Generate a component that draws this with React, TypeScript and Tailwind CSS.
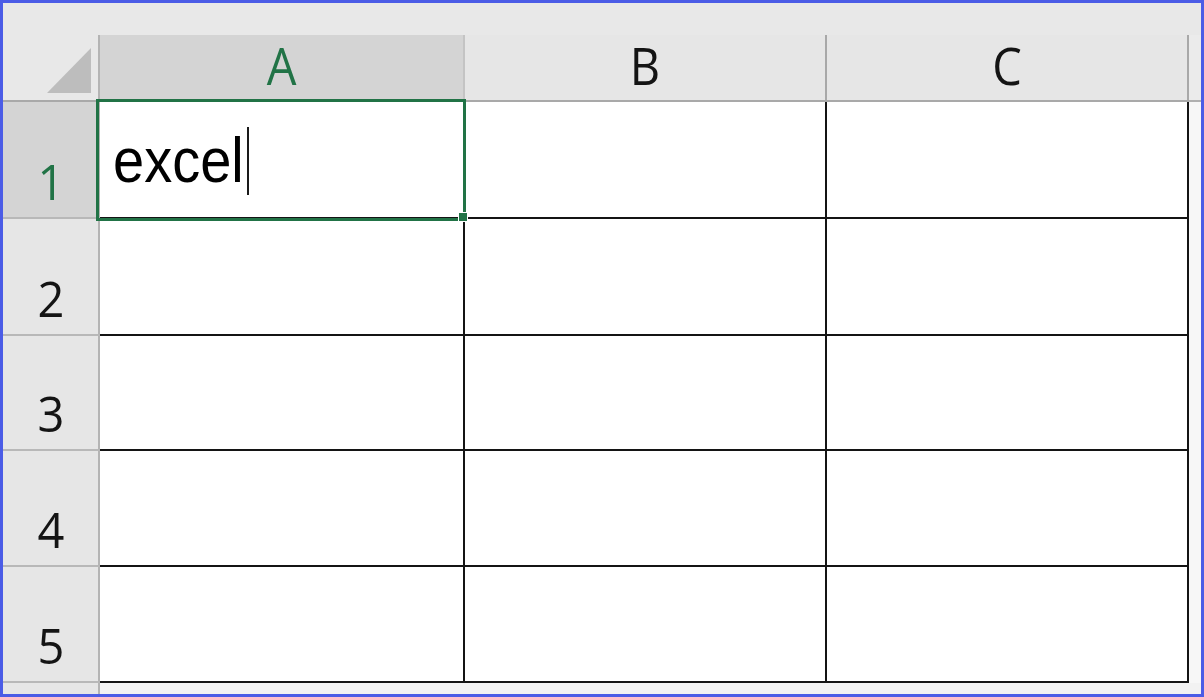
const cols = ['A', 'B', 'C'];
const rows = [1, 2, 3, 4, 5];

const headFont = { fontFamily: '"Open Sans", "Noto Sans", sans-serif' };

function Corner() {
  return (
    <div className="bg-[#e8e8e8] flex flex-col">
      <div className="h-[32px]" />
      <div className="flex-1 border-r-2 border-[#b4b4b4] border-b-2 border-b-[#a9a9a9] flex items-end justify-end pr-[7px] pb-[7px]">
        <svg width="44" height="45" viewBox="0 0 44 45">
          <polygon points="0,45 44,45 44,0" fill="#bdbdbd" />
        </svg>
      </div>
    </div>
  );
}

function ColHeader({ label, active }: { label: string; active?: boolean }) {
  return (
    <div className="bg-[#e8e8e8] flex flex-col">
      <div className="h-[32px]" />
      <div
        className={
          active
            ? 'flex-1 bg-[#d4d4d4] border-r-2 border-[#c4c4c4] border-b-2 border-b-[#a9a9a9] flex items-center justify-center text-[47px] leading-none text-[#217346]'
            : 'flex-1 bg-[#e6e6e6] border-r-2 border-[#a8a8a8] border-b-2 border-b-[#a9a9a9] flex items-center justify-center text-[47px] leading-none text-[#141414]'
        }
        style={headFont}
      >
        <span className="inline-block scale-y-[1.08] pb-[2px]">{label}</span>
      </div>
    </div>
  );
}

function RowHeader({ n, active }: { n: number; active?: boolean }) {
  return (
    <div
      className={
        active
          ? 'bg-[#d4d4d4] border-r-2 border-[#b4b4b4] border-b-2 border-b-[#b8b8b8] flex items-end justify-center pb-[11px] pl-[1px] text-[47px] leading-none text-[#217346]'
          : 'bg-[#e6e6e6] border-r-2 border-[#b4b4b4] border-b-2 border-b-[#b8b8b8] flex items-end justify-center pb-[11px] pl-[1px] text-[47px] leading-none text-[#141414]'
      }
      style={headFont}
    >
      <span className="inline-block scale-y-[1.06] origin-bottom">{n}</span>
    </div>
  );
}

function ActiveCell() {
  return (
    <div className="relative bg-white border-r-2 border-b-2 border-[#141414] flex items-end pl-[13px] pb-[25px]">
      <span
        className="inline-block origin-bottom scale-y-[1.12] text-[56px] leading-none text-black"
        style={{ fontFamily: '"Liberation Sans", Arial, sans-serif' }}
      >
        excel
      </span>
      {/* caret */}
      <div className="absolute left-[147px] top-[25px] w-[2px] h-[68px] bg-[#1a1a1a]" />
      {/* selection box */}
      <div className="absolute -left-[4px] -top-[3px] w-[370px] h-[122px] border-[3px] border-[#217346]" />
      {/* fill handle */}
      <div className="absolute left-[358px] top-[110px] w-[10px] h-[10px] bg-[#217346] border-[1px] border-white" />
    </div>
  );
}

export default function App() {
  return (
    <div className="w-[1204px] h-[697px] border-[3px] border-[#4b5ce6] bg-[#f2f2f2] overflow-hidden">
      <div className="grid h-full grid-cols-[97px_365px_362px_362px_1fr] grid-rows-[99px_117px_117px_115px_116px_116px_1fr]">
        <Corner />
        {cols.map((c, i) => (
          <ColHeader key={c} label={c} active={i === 0} />
        ))}
        <div className="bg-[#e8e8e8] flex flex-col">
          <div className="h-[32px]" />
          <div className="flex-1 bg-[#ebebeb] border-b-2 border-[#b0b0b0]" />
        </div>

        {rows.map((r) => (
          <div key={r} className="contents">
            <RowHeader n={r} active={r === 1} />
            {r === 1 ? (
              <ActiveCell />
            ) : (
              <div className="bg-white border-r-2 border-b-2 border-[#141414]" />
            )}
            <div className="bg-white border-r-2 border-b-2 border-[#141414]" />
            <div className="bg-white border-r-2 border-b-2 border-[#141414]" />
            <div className="bg-[#f7f7f7]" />
          </div>
        ))}

        <div className="bg-[#e6e6e6] border-r-2 border-[#b4b4b4]" />
        <div className="bg-[#f2f2f2] col-span-4" />
      </div>
    </div>
  );
}
